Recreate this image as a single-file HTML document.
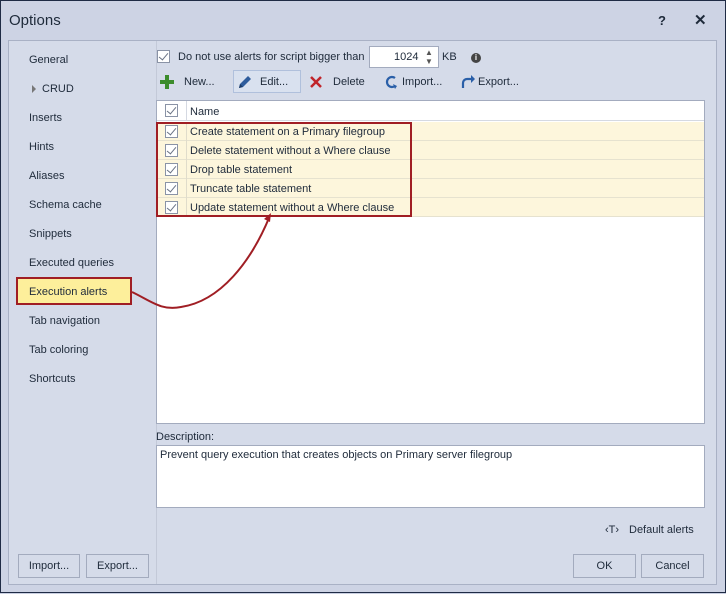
<!DOCTYPE html>
<html><head><style>
*{box-sizing:border-box;margin:0;padding:0}
body{width:726px;height:593px;background:#c9cfe1;font-family:"Liberation Sans",sans-serif;font-size:11px;color:#1e2a3a;position:relative;overflow:hidden}
.win{position:absolute;left:0;top:0;width:726px;height:593px;border:1px solid #1f2b45;background:#cdd3e4}
.a{position:absolute;white-space:nowrap}
.panel{position:absolute;left:7px;top:39px;width:709px;height:545px;background:#d5dbe9;border:1px solid #a9b1c5}
.nav{position:absolute;left:28px;margin-top:1px}
.btn{position:absolute;border:1px solid #a3abbe;background:#d5dbe9;text-align:center;line-height:22px;height:24px}
.cb{position:absolute;width:13px;height:13px;border:1px solid #8a93a6;background:#fff}
.cb:after{content:"";position:absolute;left:3px;top:0px;width:4px;height:8px;border:solid #6a7385;border-width:0 1.5px 1.5px 0;transform:rotate(40deg)}
.row{position:absolute;left:156px;width:547px;height:19px;background:#fdf6dc;border-bottom:1px solid #e6e2cf}
.row span{position:absolute;left:33px;top:4px}
.row .cb{left:8px;top:3px}
.vl{position:absolute;left:29px;top:0;height:19px;border-left:1px solid #e0dccb}
</style></head><body>
<div class="win">
<div class="a" style="left:8px;top:11px;font-size:15px;color:#1e2a3a">Options</div>
<div class="a" style="left:657px;top:12px;font-weight:bold;font-size:13px">?</div>
<div class="a" style="left:693px;top:10px;font-weight:bold;font-size:15px">✕</div>
<div class="panel"></div>
<div class="a" style="left:155px;top:40px;width:1px;height:543px;background:#c3c9d8"></div>
<div class="nav a" style="top:52px">General</div>
<div class="a" style="left:31px;top:84px;width:0;height:0;border-left:4px solid #777;border-top:4px solid transparent;border-bottom:4px solid transparent"></div>
<div class="a" style="left:41px;top:82px">CRUD</div>
<div class="nav a" style="top:110px">Inserts</div>
<div class="nav a" style="top:139px">Hints</div>
<div class="nav a" style="top:168px">Aliases</div>
<div class="nav a" style="top:197px">Schema cache</div>
<div class="nav a" style="top:226px">Snippets</div>
<div class="nav a" style="top:255px">Executed queries</div>
<div class="a" style="left:15px;top:276px;width:116px;height:28px;background:#fdef9b;border:2px solid #a01e24"></div>
<div class="nav a" style="top:284px">Execution alerts</div>
<div class="nav a" style="top:313px">Tab navigation</div>
<div class="nav a" style="top:342px">Tab coloring</div>
<div class="nav a" style="top:371px">Shortcuts</div>

<div class="cb" style="left:156px;top:49px"></div>
<div class="a" style="left:177px;top:50px">Do not use alerts for script bigger than</div>
<div class="a" style="left:368px;top:45px;width:70px;height:22px;background:#fff;border:1px solid #a3abbe"></div>
<div class="a" style="left:393px;top:50px">1024</div>
<div class="a" style="left:424px;top:47px;font-size:8px;color:#555;line-height:9px">▲<br>▼</div>
<div class="a" style="left:441px;top:50px">KB</div>
<div class="a" style="left:470px;top:52px;width:10px;height:10px;border-radius:50%;background:#444;color:#fff;font-size:8px;font-weight:bold;text-align:center;line-height:10px">i</div>

<svg class="a" style="left:158px;top:73px" width="16" height="16"><path d="M6 1h4v5h5v4h-5v5H6v-5H1V6h5z" fill="#3c8c2c"/></svg>
<div class="a" style="left:183px;top:75px">New...</div>
<div class="a" style="left:232px;top:69px;width:68px;height:23px;border:1px solid #b0c0dc;background:#d9e1ef"></div>
<svg class="a" style="left:236px;top:73px" width="16" height="16"><path d="M2 14l1-4 8-8 3 3-8 8z" fill="#2e5c9c"/><path d="M2 14l1-4 3 3z" fill="#1b3a66"/></svg>
<div class="a" style="left:259px;top:75px">Edit...</div>
<svg class="a" style="left:308px;top:74px" width="14" height="14"><path d="M2 2l10 10M12 2L2 12" stroke="#c0242a" stroke-width="2.5"/></svg>
<div class="a" style="left:332px;top:75px">Delete</div>
<svg class="a" style="left:383px;top:73px" width="16" height="16"><path d="M11 4A5 5 0 1 0 11 12" stroke="#2a5fa8" stroke-width="2.2" fill="none"/><path d="M9 10l4 2-2 3z" fill="#2a5fa8"/></svg>
<div class="a" style="left:401px;top:75px">Import...</div>
<svg class="a" style="left:459px;top:73px" width="16" height="16"><path d="M3 14V9a4 4 0 0 1 4-4h5" stroke="#2a5fa8" stroke-width="2.2" fill="none"/><path d="M11 1l4 4-4 4z" fill="#2a5fa8"/></svg>
<div class="a" style="left:477px;top:75px">Export...</div>

<div class="a" style="left:155px;top:99px;width:549px;height:324px;background:#fff;border:1px solid #a3abbe"></div>
<div class="a" style="left:156px;top:100px;width:547px;height:20px;background:#fff;border-bottom:1px solid #d5d9e2"></div>
<div class="cb" style="left:164px;top:103px"></div>
<div class="a" style="left:185px;top:100px;height:20px;border-left:1px solid #d5d9e2"></div>
<div class="a" style="left:189px;top:105px">Name</div>
<div class="row" style="top:121px"><div class="cb"></div><div class="vl"></div><span>Create statement on a Primary filegroup</span></div>
<div class="row" style="top:140px"><div class="cb"></div><div class="vl"></div><span>Delete statement without a Where clause</span></div>
<div class="row" style="top:159px"><div class="cb"></div><div class="vl"></div><span>Drop table statement</span></div>
<div class="row" style="top:178px"><div class="cb"></div><div class="vl"></div><span>Truncate table statement</span></div>
<div class="row" style="top:197px"><div class="cb"></div><div class="vl"></div><span>Update statement without a Where clause</span></div>
<div class="a" style="left:155px;top:121px;width:256px;height:95px;border:2px solid #a01e24"></div>
<svg class="a" style="left:0;top:0" width="726" height="593"><path d="M131 291C150 300 160 310 180 306C220 300 250 260 268 217" stroke="#a01e24" stroke-width="2" fill="none"/><path d="M270 212l-1 9-6-3z" fill="#a01e24"/></svg>

<div class="a" style="left:155px;top:430px">Description:</div>
<div class="a" style="left:155px;top:444px;width:549px;height:63px;background:#fff;border:1px solid #a3abbe"></div>
<div class="a" style="left:159px;top:448px">Prevent query execution that creates objects on Primary server filegroup</div>
<div class="a" style="left:604px;top:523px">‹T›</div>
<div class="a" style="left:628px;top:523px">Default alerts</div>

<div class="btn" style="left:17px;top:553px;width:62px">Import...</div>
<div class="btn" style="left:85px;top:553px;width:63px">Export...</div>
<div class="btn" style="left:572px;top:553px;width:63px">OK</div>
<div class="btn" style="left:640px;top:553px;width:63px">Cancel</div>
</div>
</body></html>
